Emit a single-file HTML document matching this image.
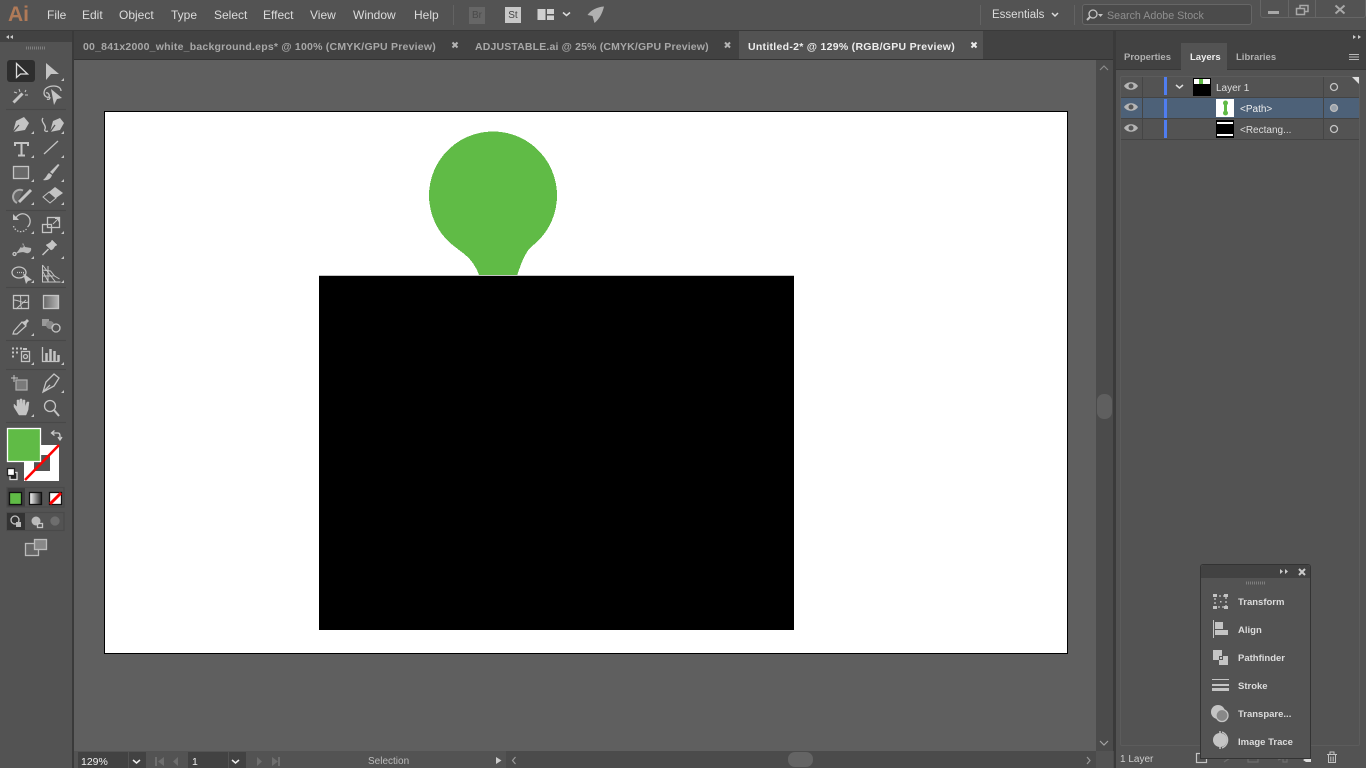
<!DOCTYPE html>
<html><head><meta charset="utf-8"><style>
html,body{margin:0;padding:0;width:1366px;height:768px;overflow:hidden;background:#535353}
body{position:relative;font-family:"Liberation Sans",sans-serif}
.a{position:absolute}
.t{position:absolute;white-space:nowrap;color:#dcdcdc;font-size:12px;line-height:14px}
.b{font-weight:bold;font-size:10.5px}
svg{position:absolute;left:0;top:0}
</style></head><body>
<!-- backgrounds -->
<div class="a" style="left:0;top:0;width:1366px;height:30px;background:#535353"></div>
<div class="a" style="left:0;top:30px;width:1366px;height:1px;background:#3a3a3a"></div>
<div class="a" style="left:0;top:31px;width:72px;height:737px;background:#535353"></div>
<div class="a" style="left:0;top:31px;width:72px;height:11px;background:#424242"></div>
<div class="a" style="left:72px;top:31px;width:2px;height:737px;background:#3a3a3a"></div>
<div class="a" style="left:74px;top:31px;width:1040px;height:28px;background:#424242"></div>
<div class="a" style="left:74px;top:59px;width:1040px;height:1px;background:#333"></div>
<div class="a" style="left:739px;top:31px;width:244px;height:28px;background:#535353"></div>
<div class="a" style="left:74px;top:60px;width:1022px;height:691px;background:#5f5f5f"></div>
<div class="a" style="left:1096px;top:60px;width:17px;height:691px;background:#4b4b4b"></div>
<div class="a" style="left:1097px;top:394px;width:15px;height:25px;border-radius:7px;background:#5f5f5f"></div>
<div class="a" style="left:1113px;top:31px;width:3px;height:737px;background:#3a3a3a"></div>
<!-- artboard -->
<div class="a" style="left:104px;top:111px;width:962px;height:541px;background:#fff;border:1px solid #000"></div>
<svg width="1366" height="768"><path shape-rendering="crispEdges" d="M479.500 276C476 266 470 258 463 253C460 251 458 249 456 247.700A64 64 0 1 1 531 247C526 252 522 260 517 276Z" fill="#60bb46"/></svg>
<div class="a" style="left:319px;top:275px;width:475px;height:1px;background:#c4c4c4"></div>
<div class="a" style="left:319px;top:276px;width:475px;height:354px;background:#000"></div>
<!-- status bar -->
<div class="a" style="left:74px;top:751px;width:1040px;height:17px;background:#4b4b4b"></div>
<div class="a" style="left:74px;top:751px;width:432px;height:17px;background:#535353"></div>
<div class="a" style="left:1096px;top:751px;width:17px;height:17px;background:#535353"></div>
<div class="a" style="left:78px;top:752px;width:50px;height:16px;background:#424242"></div>
<div class="a" style="left:129px;top:752px;width:17px;height:16px;background:#424242"></div>
<div class="a" style="left:188px;top:752px;width:40px;height:16px;background:#424242"></div>
<div class="a" style="left:229px;top:752px;width:17px;height:16px;background:#424242"></div>
<div class="a" style="left:788px;top:752px;width:25px;height:15px;border-radius:7px;background:#646464"></div>
<!-- right panel -->
<div class="a" style="left:1116px;top:31px;width:250px;height:11px;background:#424242"></div>
<div class="a" style="left:1116px;top:42px;width:250px;height:28px;background:#424242"></div>
<div class="a" style="left:1116px;top:69px;width:250px;height:1px;background:#383838"></div>
<div class="a" style="left:1181px;top:43px;width:46px;height:27px;background:#535353"></div>
<div class="a" style="left:1120px;top:76px;width:240px;height:670px;border:1px solid #5c5c5c;border-radius:2px;box-sizing:border-box"></div>
<div class="a" style="left:1121px;top:98px;width:238px;height:20px;background:#4d6178"></div>
<div class="a" style="left:1121px;top:97px;width:238px;height:1px;background:#444"></div>
<div class="a" style="left:1121px;top:118px;width:238px;height:1px;background:#444"></div>
<div class="a" style="left:1121px;top:139px;width:238px;height:1px;background:#444"></div>
<div class="a" style="left:1142px;top:77px;width:1px;height:62px;background:#454545"></div>
<div class="a" style="left:1323px;top:77px;width:1px;height:62px;background:#454545"></div>
<div class="a" style="left:1164px;top:77px;width:3px;height:18px;background:#4f7df0"></div>
<div class="a" style="left:1164px;top:99px;width:3px;height:19px;background:#4f7df0"></div>
<div class="a" style="left:1164px;top:120px;width:3px;height:18px;background:#4f7df0"></div>
<!-- thumbs -->
<div class="a" style="left:1193px;top:78px;width:18px;height:18px;background:#000"></div>
<div class="a" style="left:1194px;top:79px;width:16px;height:5px;background:#fff"></div>
<div class="a" style="left:1199px;top:79px;width:4px;height:5px;background:#60bb46"></div>
<div class="a" style="left:1216px;top:99px;width:18px;height:18px;background:#fff"></div>
<div class="a" style="left:1216px;top:120px;width:18px;height:18px;background:#000"></div>
<div class="a" style="left:1217px;top:122px;width:16px;height:2px;background:#fff"></div>
<div class="a" style="left:1217px;top:134px;width:16px;height:2px;background:#fff"></div>
<!-- layers footer icons beneath float panel -->
<svg width="1366" height="768" fill="none" stroke="#c4c4c4" stroke-width="1.200">
<rect x="1196.500" y="753.500" width="10" height="9"/>
<path d="M1224 762l6-4h3M1248 759v3h10v-4M1278 760l5-2v4h4v-4" stroke="#6e6e6e"/>
<path d="M1306 758h5v4h-5zM1303 760l3-2v4z" fill="#ddd" stroke="none"/>
<path d="M1327 754.500h10M1330 754v-2h4v2M1328.500 755v7.500h7V755M1330.800 756.500v5M1333.200 756.500v5" stroke-width="1"/>
</svg>
<!-- floating panel -->
<div class="a" style="left:1200px;top:564px;width:111px;height:195px;background:#535353;border:1px solid #333;box-sizing:border-box;border-radius:3px 3px 0 0"></div>
<div class="a" style="left:1201px;top:565px;width:109px;height:13px;background:#424242;border-radius:3px 3px 0 0"></div>
<!-- top-right boxes -->
<div class="a" style="left:1082px;top:4px;width:170px;height:21px;background:#4b4b4b;border:1px solid #666;border-radius:3px;box-sizing:border-box"></div>
<div class="a" style="left:1260px;top:-3px;width:106px;height:21px;border:1px solid #666;border-radius:3px;box-sizing:border-box"></div>
<div class="a" style="left:1288px;top:0;width:1px;height:18px;background:#666"></div>
<div class="a" style="left:1315px;top:0;width:1px;height:18px;background:#666"></div>
<div class="a" style="left:453px;top:5px;width:1px;height:20px;background:#636363"></div>
<div class="a" style="left:980px;top:5px;width:1px;height:20px;background:#636363"></div>
<div class="a" style="left:1074px;top:5px;width:1px;height:20px;background:#636363"></div>

<!-- text: menu -->
<div class="t" style="left:8px;top:2px;font-size:21px;line-height:26px;font-weight:bold;color:#b07a58">Ai</div>
<div class="t" style="left:47px;top:8px">File</div>
<div class="t" style="left:82px;top:8px">Edit</div>
<div class="t" style="left:119px;top:8px">Object</div>
<div class="t" style="left:171px;top:8px">Type</div>
<div class="t" style="left:214px;top:8px">Select</div>
<div class="t" style="left:263px;top:8px">Effect</div>
<div class="t" style="left:310px;top:8px">View</div>
<div class="t" style="left:353px;top:8px">Window</div>
<div class="t" style="left:414px;top:8px">Help</div>
<div class="a" style="left:469px;top:7px;width:16px;height:17px;background:#666;color:#4a4a4a;font:10px/17px 'Liberation Sans',sans-serif;text-align:center">Br</div>
<div class="a" style="left:505px;top:7px;width:16px;height:16px;background:#c8c8c8;color:#444;font:10px/17px 'Liberation Sans',sans-serif;text-align:center">St</div>
<div class="t" style="left:992px;top:8px;font-size:11.500px">Essentials</div>
<div class="t" style="left:1107px;top:9px;font-size:10.700px;color:#8f8f8f">Search Adobe Stock</div>
<!-- tabs -->
<div class="t b" style="left:83px;top:40px;color:#a8a8a8;letter-spacing:.22px">00_841x2000_white_background.eps* @ 100% (CMYK/GPU Preview)</div>
<div class="t b" style="left:475px;top:40px;color:#a8a8a8;letter-spacing:.16px">ADJUSTABLE.ai @ 25% (CMYK/GPU Preview)</div>
<div class="t b" style="left:748px;top:40px;color:#eee;letter-spacing:.28px">Untitled-2* @ 129% (RGB/GPU Preview)</div>
<!-- panel text -->
<div class="t b" style="left:1124px;top:51px;color:#b0b0b0;font-size:9.500px">Properties</div>
<div class="t b" style="left:1190px;top:51px;color:#eee;font-size:9.500px">Layers</div>
<div class="t b" style="left:1236px;top:51px;color:#b0b0b0;font-size:9.500px">Libraries</div>
<div class="t" style="left:1216px;top:82px;font-size:10px;color:#ddd">Layer 1</div>
<div class="t" style="left:1240px;top:103px;font-size:10px;color:#eee">&lt;Path&gt;</div>
<div class="t" style="left:1240px;top:124px;font-size:10px;color:#ddd">&lt;Rectang...</div>
<div class="t" style="left:1120px;top:753px;font-size:10px;color:#ccc">1 Layer</div>
<!-- float text -->
<div class="t b" style="left:1238px;top:596px;font-size:9.500px">Transform</div>
<div class="t b" style="left:1238px;top:624px;font-size:9.500px">Align</div>
<div class="t b" style="left:1238px;top:652px;font-size:9.500px">Pathfinder</div>
<div class="t b" style="left:1238px;top:680px;font-size:9.500px">Stroke</div>
<div class="t b" style="left:1238px;top:708px;font-size:9.500px">Transpare...</div>
<div class="t b" style="left:1238px;top:736px;font-size:9.500px">Image Trace</div>
<!-- status text -->
<div class="t" style="left:81px;top:755px;font-size:10.500px;color:#eee">129%</div>
<div class="t" style="left:192px;top:755px;font-size:10.500px;color:#eee">1</div>
<div class="t" style="left:368px;top:755px;font-size:10px;color:#bbb">Selection</div>

<!-- icons -->
<svg width="1366" height="768" fill="none" stroke="#c4c4c4" stroke-width="1.300">
<defs><linearGradient id="g"><stop offset="0" stop-color="#666"/><stop offset="1" stop-color="#b5b5b5"/></linearGradient><linearGradient id="g2"><stop offset="0" stop-color="#fff"/><stop offset="1" stop-color="#222"/></linearGradient></defs>
<!-- tab closes -->
<path d="M452.500 42.500l5 5M457.500 42.500l-5 5M725 42.500l5 5M730 42.500l-5 5" stroke="#b5b5b5" stroke-width="2"/>
<path d="M971.500 42.500l5 5M976.500 42.500l-5 5" stroke="#eee" stroke-width="2"/>
<!-- search, window controls -->
<circle cx="1093" cy="14" r="4"/><path d="M1090 17l-3 3" stroke-width="2"/><path d="M1098 14h5l-2.500 3z" fill="#c4c4c4" stroke="none"/>
<path d="M1268 12.500h11" stroke-width="3" stroke="#a8a8a8"/>
<path d="M1296.500 8.500h8v6h-8zM1300 8V5.500h8v6h-3.500" stroke="#a8a8a8" stroke-width="1.500"/>
<path d="M1335.500 5.500l9 8M1344.500 5.500l-9 8" stroke="#a8a8a8" stroke-width="2"/>
<!-- layout / chevrons / rocket -->
<path d="M537.500 9h8v11h-8zM547 9h7v5h-7zM547 15.500h7V20h-7z" fill="#d0d0d0" stroke="none"/>
<path d="M563 12.500l3.500 3 3.500-3M1052 13l3 3 3-3" stroke="#ddd" stroke-width="1.500"/>
<path d="M604 6.500C597 7 591 10 587.500 15l5 1 2 7c5-4 8-10 9.500-16.500z" fill="#b0b0b0" stroke="none"/>
<!-- double arrows -->
<path d="M9 35l-3 2 3 2zM13 35l-3 2 3 2z" fill="#ccc" stroke="none"/>
<path d="M1353 35l3 2-3 2zM1358 35l3 2-3 2z" fill="#ccc" stroke="none"/>
<path d="M1349 54.500h10M1349 57h10M1349 59.500h10" stroke="#bbb" stroke-width="1"/>
<path d="M26 48h20" stroke="#7e7e7e" stroke-width="3" stroke-dasharray="1 1"/>
<!-- tool selected -->
<rect x="7" y="60" width="28" height="22" rx="3" fill="#2e2e2e" stroke="none"/>
<path d="M16.500 63.500L27.500 74h-7l-4 3.500z" stroke="#ddd"/>
<path d="M46 63l13 11h-8l-5 6z" fill="#c4c4c4" stroke="none"/>
<!-- separators -->
<path d="M6 109.500h60M6 210.500h60M6 287.500h60M6 340.500h60M6 369.500h60M6 422.500h60" stroke="#484848"/>
<!-- wand, lasso -->
<path d="M13.500 102.500l9-9" stroke-width="3"/><path d="M19 89l1 3M26 90l-1 2M28 95h-3M14 92l3 1" stroke-width="1"/>
<path d="M44 93c0-5 5-7 10-7 4 0 7 2 7 5" /><path d="M44 93c0 3 3 5 5 4 1-2-1-5-3-4M47 99c2 1 3 0 3-2"/><path d="M51 89l11 9-5 1-3 6z" fill="#c4c4c4" stroke="none"/>
<!-- pen, curvature -->
<path d="M13 132l3-11 8-4 5 6-4 7z" fill="#c4c4c4" stroke="none"/><path d="M13 132l6-7" stroke="#535353"/>
<path d="M50 132l3-11 7-3 4 5-4 7z" fill="#c4c4c4" stroke="none"/><path d="M50 132l5-7" stroke="#535353"/><path d="M43 118c-3 4 4 7 2 11-1 2 1 3 3 2" />
<!-- type, line -->
<path d="M15 146v-3h13v3M21.500 143v12M18 155.500h7" stroke-width="2"/>
<path d="M44 154l14-13" />
<!-- rect, brush -->
<rect x="13.500" y="166.500" width="15" height="12" fill="#696969"/>
<path d="M43 180c4 1 8-1 9-5l-3-2c-2 1-2 4-6 7z" fill="#c4c4c4" stroke="none"/><path d="M50 172l8-8 1.500 1-7 9z" fill="#c4c4c4" stroke="none"/>
<!-- shaper, eraser -->
<path d="M23 190.500a6.700 6.700 0 1 0-6 12.500" stroke-width="2" fill="#666" stroke="#aaa"/><path d="M19 202l12-12" stroke-width="3"/>
<path d="M43 197l6-5 7 6-6 5z" stroke-width="1"/><path d="M49 192l6-5 8 6-7 5z" fill="#c4c4c4" stroke="none"/>
<!-- rotate, scale -->
<path d="M15.500 219a7.500 7.500 0 1 1 12 8"/><path d="M13.500 226a7.500 7.500 0 0 0 13 3" stroke-dasharray="1.500 1.500"/><path d="M13 214v6h6z" fill="#c4c4c4" stroke="none"/>
<rect x="42.500" y="224.500" width="9" height="8"/><rect x="47.500" y="217.500" width="12" height="10"/><path d="M53 224l5-5M55 218.500h3.500v3" stroke-width="1"/>
<!-- warp, pin -->
<path d="M15 254c4-3 6-8 8-11l2 4 6 1c1 3-2 6-5 5-4-2-7 0-11 1z" fill="#b8b8b8" stroke="none"/><circle cx="14.500" cy="254" r="1.500"/><circle cx="22" cy="246" r="1" stroke="#535353"/>
<path d="M42.500 255l6-6" stroke-width="1.500"/><path d="M46 245l5 5 2-1 2-3 2-1-5-5-1 2-3 2z" fill="#c4c4c4" stroke="#c4c4c4" stroke-width=".5"/>
<!-- free transform, persp -->
<ellipse cx="19" cy="272.500" rx="7" ry="5.500"/><path d="M17 272.500h7" stroke-dasharray="1 1"/><path d="M23 273l9 7-4 1-2 3z" fill="#c4c4c4" stroke="none"/>
<path d="M42.500 265v17h18M42.500 265l13 17M42.500 271l6 11M42.500 276h11M42.500 270l8 1 4 5 5 3M48 266v15" stroke-width="1"/>
<!-- mesh, gradient -->
<rect x="13.500" y="295.500" width="15" height="13"/><path d="M14 300c5 0 9 4 14 2M20 295c2 4-1 9 2 14M16 309l10-9" stroke-width="1"/>
<rect x="43.500" y="295.500" width="15" height="13" fill="url(#g)"/>
<!-- eyedrop, blend -->
<path d="M13 334l1-3 8-9 4 4-9 8z" stroke-width="1.200"/><path d="M22 322l3-1 2-2 2 2-2 2-1 3z" fill="#c4c4c4" stroke="none"/>
<rect x="42" y="319" width="7" height="7" fill="#999" stroke="none"/><circle cx="50" cy="325" r="4" fill="#888" stroke="none"/><circle cx="56" cy="328" r="4"/>
<!-- symbol, graph -->
<path d="M12 348.500h2M16 348.500h2M20 348.500h2M12 352.500h2M16 352.500h2M12 356.500h2" stroke-width="2"/>
<rect x="21.500" y="351.500" width="8" height="10"/><circle cx="25.500" cy="356.500" r="2"/><path d="M23 349h4" stroke-width="2"/>
<path d="M42.500 347v14.500h17" /><path d="M46.500 353v8M50.500 349v12M54.500 351v10M58.500 355v6" stroke-width="2.500"/>
<!-- artboard, slice -->
<path d="M11 378h7M14 375v7" stroke-width="1"/><path d="M17 380h10v10H16v-10z" fill="#7a7a7a" stroke="#aaa"/>
<path d="M43 392l3-10 8-8 5 4-5 8zM43 392l7-7" />
<!-- hand, zoom -->
<path d="M14 404l3 3 0-7 2 0 0 6 1-7h2l0 7 1-6h2l0 7 2-5h2l-1 8-2 5h-7l-5-8z" fill="#c4c4c4" stroke="#c4c4c4" stroke-width=".5"/>
<circle cx="50" cy="406" r="5.500"/><path d="M54 410l5 6" stroke-width="2"/>
<!-- swatches -->
<rect x="24" y="445" width="35" height="36" fill="#fff" stroke="none"/>
<rect x="34" y="455" width="16" height="16" fill="#535353" stroke="none"/>
<path d="M25 480l34-35" stroke="#f00" stroke-width="2.500"/>
<rect x="7.500" y="428.500" width="33" height="33" fill="#60bb46" stroke="#fff" stroke-width="1.300"/>
<path d="M52 433h6c2 0 2 2 2 4v2M54.500 430.500l-3 2.500 3 2.500M58 437l2 3 2-3" stroke="#ccc"/>
<rect x="10" y="472.500" width="7" height="7" fill="#222" stroke="#ddd"/><rect x="7.500" y="468.500" width="7" height="7" fill="#fff" stroke="#222"/>
<!-- color modes -->
<rect x="7" y="488" width="18" height="19" fill="#3d3d3d" stroke="none"/>
<path d="M7 487.500h57v19.500H7z" stroke="#4a4a4a"/>
<rect x="9.500" y="492.500" width="12" height="12" fill="#60bb46" stroke="#111"/>
<rect x="29.500" y="492.500" width="12" height="12" fill="url(#g2)" stroke="#111"/>
<rect x="49.500" y="492.500" width="12" height="12" fill="#fff" stroke="#111"/><path d="M50 504l11-11" stroke="#f00" stroke-width="3"/>
<!-- draw modes -->
<path d="M7 512.500h57v18H7z" stroke="#4a4a4a"/>
<rect x="7" y="513" width="18" height="17" fill="#333" stroke="none"/>
<circle cx="15" cy="520" r="4"/><rect x="16" y="522" width="5" height="5" fill="#bbb" stroke="none"/>
<circle cx="36" cy="521" r="4.500" fill="#bbb" stroke="none"/><rect x="37.500" y="523.500" width="5" height="4"/>
<circle cx="55" cy="521" r="4" stroke="#6e6e6e" fill="#6e6e6e"/>
<!-- screen mode -->
<rect x="25.500" y="543.500" width="13" height="12" fill="#666" stroke="#bbb"/><rect x="34.500" y="539.500" width="12" height="10" fill="#888" stroke="#bbb"/>
<!-- tool flyout triangles -->
<path fill="#c4c4c4" stroke="none" d="M64 81h-3l3-3zM34 134h-3l3-3zM64 134h-3l3-3zM34 158h-3l3-3zM64 158h-3l3-3zM34 182h-3l3-3zM64 182h-3l3-3zM34 205h-3l3-3zM64 205h-3l3-3zM34 234h-3l3-3zM64 234h-3l3-3zM34 259h-3l3-3zM64 259h-3l3-3zM34 283h-3l3-3zM64 283h-3l3-3zM34 336h-3l3-3zM34 365h-3l3-3zM64 365h-3l3-3zM64 393h-3l3-3zM34 417h-3l3-3z"/>
<!-- layers -->
<g stroke="none" fill="#b5b5b5">
<path d="M1124 86c3-5 11-5 14 0-3 5-11 5-14 0zM1124 107c3-5 11-5 14 0-3 5-11 5-14 0zM1124 128c3-5 11-5 14 0-3 5-11 5-14 0z"/>
</g>
<g fill="#555" stroke="none"><circle cx="1131" cy="86" r="2.500"/><circle cx="1131" cy="107" r="2.500"/><circle cx="1131" cy="128" r="2.500"/></g>
<path d="M1176 85l3.500 3 3.500-3" stroke="#ddd" stroke-width="1.500"/>
<circle cx="1334" cy="87" r="3.500"/><circle cx="1334" cy="108" r="3.500" fill="#9aa3ad" stroke="#bbb"/><circle cx="1334" cy="129" r="3.500"/>
<path d="M1352 77h7v7z" fill="#ddd" stroke="none"/>
<path d="M1224 103h3v10h-3z" fill="#60bb46" stroke="none"/>
<circle cx="1225.500" cy="103" r="2.500" fill="#60bb46" stroke="none"/><circle cx="1225.500" cy="113" r="2.500" fill="#60bb46" stroke="none"/>
<path d="M1100 70l4-4 4 4" stroke="#8a8a8a" stroke-width="1.200"/>
<path d="M1100 741l4 4 4-4" stroke="#a5a5a5" stroke-width="1.200"/>
<!-- float header -->
<path d="M1280 569l3 2.500-3 2.500zM1285 569l3 2.500-3 2.500z" fill="#ccc" stroke="none"/>
<path d="M1299 569l6 6M1305 569l-6 6" stroke="#ccc" stroke-width="2"/>
<path d="M1246 583h20" stroke="#7e7e7e" stroke-width="3" stroke-dasharray="1 1"/>
<!-- float icons -->
<rect x="1215" y="596" width="11" height="11" stroke-dasharray="2 2"/>
<g fill="#c4c4c4" stroke="none">
<rect x="1213" y="594" width="4" height="3"/><rect x="1224" y="594" width="4" height="3"/><rect x="1213" y="606" width="4" height="3"/><rect x="1224" y="606" width="4" height="3"/><rect x="1220" y="601" width="1.500" height="1.500"/>
<rect x="1213" y="620" width="1" height="18"/><rect x="1215" y="622" width="8" height="7"/><rect x="1215" y="630" width="13" height="5"/>
<rect x="1213" y="650" width="9" height="10"/><rect x="1219" y="656" width="9" height="9"/>
<rect x="1212" y="679" width="17" height="1"/><rect x="1212" y="684" width="17" height="2"/><rect x="1212" y="688" width="17" height="3"/>
<circle cx="1218" cy="712" r="7"/>
<circle cx="1220" cy="740" r="7"/>
</g>
<rect x="1219.500" y="656.500" width="3" height="3" stroke="#535353" stroke-width="1"/>
<circle cx="1222" cy="715.500" r="6" fill="#888" stroke="#c4c4c4"/>
<path d="M1222 732a8.500 8.500 0 0 1 0 16" stroke-width="1.300"/><path d="M1220 731v3M1220 746v3" stroke-width="1.500"/>
<!-- status icons -->
<path d="M133 760l3.500 3 3.500-3M232 760l3.500 3 3.500-3" stroke="#eee" stroke-width="1.500"/>
<g fill="#6e6e6e" stroke="none"><path d="M155 757h2v9h-2zM164 757l-6 4.500 6 4.500zM178 757l-5 4.500 5 4.500zM257 757l5 4.500-5 4.500zM272 757l6 4.500-6 4.500zM278 757h2v9h-2z"/></g>
<path d="M496 757l5.500 3.500-5.500 3.500z" fill="#ccc" stroke="none"/>
<path d="M515.500 757l-3 3.500 3 3.500M1087 757l3 3.500-3 3.500" stroke="#999" stroke-width="1.200"/>
</svg>
</body></html>
